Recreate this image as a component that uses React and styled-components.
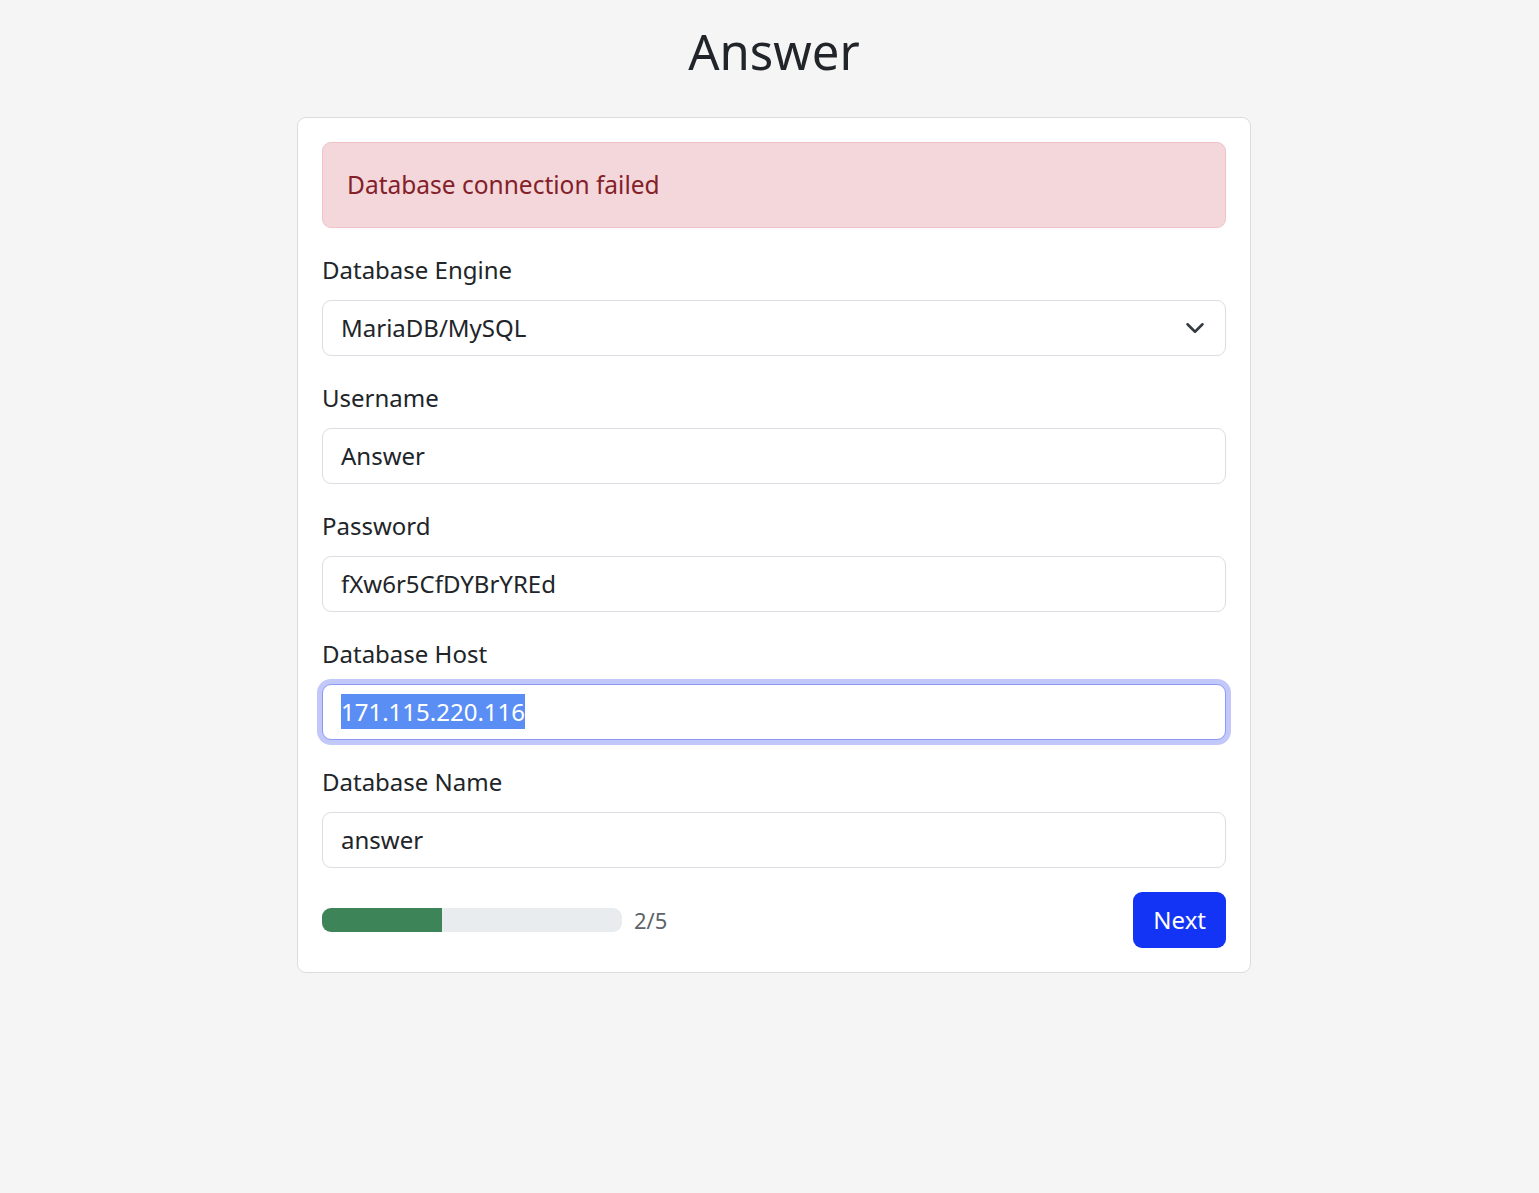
import React from 'react';
import styled, { createGlobalStyle } from 'styled-components';

const GlobalStyle = createGlobalStyle`
  body {
    margin: 0;
    background: #f5f5f5;
    font-family: "Noto Sans", "Open Sans", sans-serif;
    color: #212529;
  }
`;

const Page = styled.div`
  display: flex;
  flex-direction: column;
  align-items: center;
  padding: 22px 0 0 9px;
  min-height: 1193px;
  box-sizing: border-box;
`;

const Title = styled.h1`
  margin: 0 0 36px;
  font-size: 49px;
  font-weight: 400;
  line-height: 1.2;
`;

const Card = styled.div`
  width: 954px;
  box-sizing: border-box;
  background: #fff;
  border: 1px solid #dcdcdc;
  border-radius: 9px;
  padding: 24px;
`;

const Alert = styled.div`
  box-sizing: border-box;
  height: 86px;
  display: flex;
  align-items: center;
  padding: 0 24px;
  margin-bottom: 24px;
  background: #f3d7da;
  border: 1px solid #f0c2c7;
  border-radius: 9px;
  color: #842029;
  font-size: 24.5px;
`;

const Field = styled.div`
  margin-bottom: 24px;
`;

const Label = styled.label`
  display: block;
  font-size: 24px;
  line-height: 36px;
  margin-bottom: 12px;
`;

const Control = styled.div`
  position: relative;
  box-sizing: border-box;
  height: 56px;
  display: flex;
  align-items: center;
  padding: 0 18px;
  border: 1px solid ${p => (p.$focused ? '#8a9af4' : '#dadde1')};
  border-radius: 9px;
  background: #fff;
  font-size: 24px;
  box-shadow: ${p => (p.$focused ? '0 0 0 5px #c3c8fb' : 'none')};
`;

const Selected = styled.span`
  background: #5b8ef5;
  color: #fff;
  line-height: 35px;
`;

const Chevron = styled.svg`
  margin-left: auto;
  margin-right: 2px;
  width: 20px;
  height: 20px;
`;

const Footer = styled.div`
  display: flex;
  align-items: center;
  justify-content: space-between;
`;

const ProgressWrap = styled.div`
  display: flex;
  align-items: center;
  gap: 12px;
`;

const Track = styled.div`
  width: 300px;
  height: 24px;
  border-radius: 9px;
  background: #e9ecef;
  overflow: hidden;
`;

const Fill = styled.div`
  height: 100%;
  background: #3d8459;
`;

const Step = styled.span`
  font-size: 22px;
  color: #5c636a;
`;

const Button = styled.button`
  height: 56px;
  padding: 0 20px;
  border: none;
  border-radius: 9px;
  background: #1434f5;
  color: #fff;
  font-family: inherit;
  font-size: 24px;
`;

const fields = [
  { label: 'Username', value: 'Answer' },
  { label: 'Password', value: 'fXw6r5CfDYBrYREd' },
  { label: 'Database Host', value: '171.115.220.116', focused: true },
  { label: 'Database Name', value: 'answer' },
];

export default function App() {
  const step = 2;
  const total = 5;
  return (
    <>
      <GlobalStyle />
      <Page>
        <Title>Answer</Title>
        <Card>
          <Alert>Database connection failed</Alert>
          <Field>
            <Label>Database Engine</Label>
            <Control>
              MariaDB/MySQL
              <Chevron viewBox="0 0 16 16" fill="none" stroke="#343a40" strokeWidth="2" strokeLinecap="round" strokeLinejoin="round">
                <path d="M2 5l6 6 6-6" />
              </Chevron>
            </Control>
          </Field>
          {fields.map(f => (
            <Field key={f.label}>
              <Label>{f.label}</Label>
              <Control $focused={f.focused}>
                {f.focused ? <Selected>{f.value}</Selected> : f.value}
              </Control>
            </Field>
          ))}
          <Footer>
            <ProgressWrap>
              <Track>
                <Fill style={{ width: `${(step / total) * 100}%` }} />
              </Track>
              <Step>
                {step}/{total}
              </Step>
            </ProgressWrap>
            <Button>Next</Button>
          </Footer>
        </Card>
      </Page>
    </>
  );
}
